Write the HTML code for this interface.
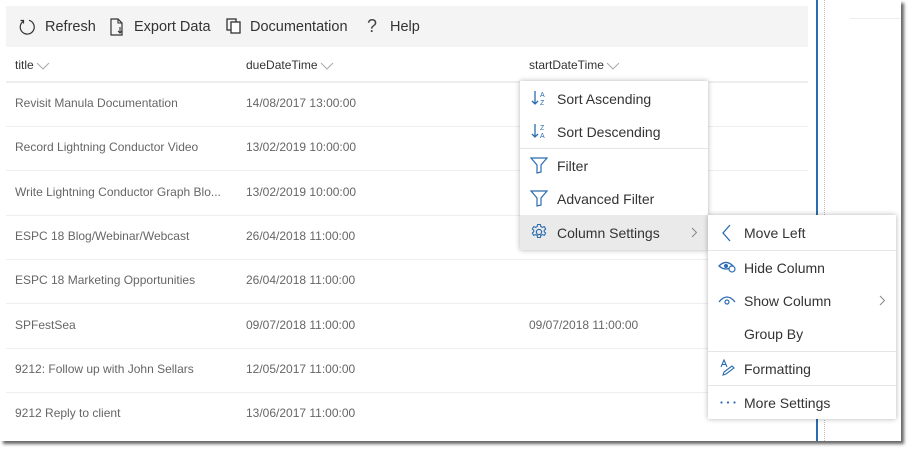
<!DOCTYPE html>
<html><head><style>
*{margin:0;padding:0;box-sizing:border-box}
body{width:915px;height:455px;background:#fff;position:relative;overflow:hidden;font-family:"Liberation Sans",sans-serif}
.frame{position:absolute;left:0;top:0;width:901px;height:441px;background:#fff;box-shadow:3px 3px 3px #666}
.tb{position:absolute;left:6px;top:6px;width:802px;height:41px;background:#f4f4f4;font-size:14.5px;color:#333}
.tb span{position:absolute;top:13px}
.hd{position:absolute;top:58px;font-size:12px;color:#333}
.hd svg{position:relative;display:inline-block;margin-left:2px;vertical-align:middle}
.row{position:absolute;left:6px;width:802px;border-top:1px solid #eee;height:44px}
.c{position:absolute;font-size:12px;color:#666}
.m{position:absolute;background:#fff;box-shadow:0 0 5px rgba(0,0,0,.3);font-size:14px;color:#333}
.it{position:absolute;left:0;right:0;height:33px}
.it span{position:absolute;top:9px}
.sep{position:absolute;left:0;right:0;border-top:1px solid #e6e6e6}
svg{position:absolute}
</style></head><body>
<div class="frame"></div>
<div class="tb">
<svg style="left:12px;top:12px" width="18" height="18" viewBox="0 0 18 18"><path d="M5 3.5A7 7 0 1 0 11 2.3" fill="none" stroke="#333" stroke-width="1.2"/><path d="M2.5 2.5h3v3" fill="none" stroke="#333" stroke-width="1.2"/></svg>
<span style="left:39px">Refresh</span>
<svg style="left:103px;top:12px" width="16" height="18" viewBox="0 0 16 18"><path d="M2 1h7l4 4v12H2z" fill="none" stroke="#333" stroke-width="1.2"/><path d="M9 1v4h4M11 9v6M9 13l2 2 2-2" fill="none" stroke="#333" stroke-width="1.1"/></svg>
<span style="left:128px">Export Data</span>
<svg style="left:220px;top:12px" width="16" height="16" viewBox="0 0 16 16"><rect x="1" y="1" width="9" height="11" fill="none" stroke="#333" stroke-width="1.3"/><rect x="5" y="4" width="9" height="11" fill="#fff" stroke="#333" stroke-width="1.3"/></svg>
<span style="left:244px">Documentation</span>
<span style="left:361px;font-size:18px;top:10px;color:#444">?</span>
<span style="left:384px">Help</span>
</div>
<div class="hd" style="left:15px">title<svg width="14" height="8" viewBox="0 0 14 8"><path d="M1 1l6 6 6-6" fill="none" stroke="#aaa" stroke-width="1"/></svg></div>
<div class="hd" style="left:246px">dueDateTime<svg width="14" height="8" viewBox="0 0 14 8"><path d="M1 1l6 6 6-6" fill="none" stroke="#aaa" stroke-width="1"/></svg></div>
<div class="hd" style="left:529px">startDateTime<svg width="14" height="8" viewBox="0 0 14 8"><path d="M1 1l6 6 6-6" fill="none" stroke="#aaa" stroke-width="1"/></svg></div>
<div class="row" style="top:81px;border-top:2px solid #eee"></div>
<div class="row" style="top:126px"></div><div class="row" style="top:170px"></div><div class="row" style="top:215px"></div><div class="row" style="top:259px"></div><div class="row" style="top:303px"></div><div class="row" style="top:348px"></div><div class="row" style="top:392px"></div>
<div class="c" style="left:15px;top:96px">Revisit Manula Documentation</div><div class="c" style="left:246px;top:96px">14/08/2017 13:00:00</div>
<div class="c" style="left:15px;top:140px">Record Lightning Conductor Video</div><div class="c" style="left:246px;top:140px">13/02/2019 10:00:00</div>
<div class="c" style="left:15px;top:185px">Write Lightning Conductor Graph Blo...</div><div class="c" style="left:246px;top:185px">13/02/2019 10:00:00</div>
<div class="c" style="left:15px;top:229px">ESPC 18 Blog/Webinar/Webcast</div><div class="c" style="left:246px;top:229px">26/04/2018 11:00:00</div>
<div class="c" style="left:15px;top:273px">ESPC 18 Marketing Opportunities</div><div class="c" style="left:246px;top:273px">26/04/2018 11:00:00</div>
<div class="c" style="left:15px;top:318px">SPFestSea</div><div class="c" style="left:246px;top:318px">09/07/2018 11:00:00</div><div class="c" style="left:529px;top:318px">09/07/2018 11:00:00</div>
<div class="c" style="left:15px;top:362px">9212: Follow up with John Sellars</div><div class="c" style="left:246px;top:362px">12/05/2017 11:00:00</div>
<div class="c" style="left:15px;top:406px">9212 Reply to client</div><div class="c" style="left:246px;top:406px">13/06/2017 11:00:00</div>
<div style="position:absolute;left:816px;top:0;width:2px;height:441px;background:#2b6cb0"></div>
<div style="position:absolute;left:824px;top:0;height:441px;border-left:1px dotted #bbb"></div>
<div style="position:absolute;left:850px;top:18px;width:51px;border-top:1px solid #eee"></div>

<div class="m" style="left:520px;top:81px;width:188px;height:169px">
<svg style="left:11px;top:9px" width="16" height="16" viewBox="0 0 16 16"><path d="M4 1v13M1 11l3 3 3-3" fill="none" stroke="#2b6cb0" stroke-width="1.3"/><text x="9" y="7" font-size="7" fill="#2b6cb0" font-family="Liberation Sans">A</text><text x="9" y="15" font-size="7" fill="#2b6cb0" font-family="Liberation Sans">Z</text></svg>
<div class="it" style="top:1px"><span style="left:37px">Sort Ascending</span></div>
<svg style="left:11px;top:42px" width="16" height="16" viewBox="0 0 16 16"><path d="M4 1v13M1 11l3 3 3-3" fill="none" stroke="#2b6cb0" stroke-width="1.3"/><text x="9" y="7" font-size="7" fill="#2b6cb0" font-family="Liberation Sans">Z</text><text x="9" y="15" font-size="7" fill="#2b6cb0" font-family="Liberation Sans">A</text></svg>
<div class="it" style="top:34px"><span style="left:37px">Sort Descending</span></div>
<div class="sep" style="top:67px"></div>
<svg style="left:10px;top:76px" width="18" height="17" viewBox="0 0 18 17"><path d="M1 1h16l-6 7v7l-4 1V8z" fill="none" stroke="#2b6cb0" stroke-width="1.2"/></svg>
<div class="it" style="top:68px"><span style="left:37px">Filter</span></div>
<svg style="left:10px;top:109px" width="18" height="17" viewBox="0 0 18 17"><path d="M1 1h16l-6 7v7l-4 1V8z" fill="none" stroke="#2b6cb0" stroke-width="1.2"/></svg>
<div class="it" style="top:101px"><span style="left:37px">Advanced Filter</span></div>
<div class="it" style="top:134px;height:35px;background:#eaeaea"><span style="left:37px;top:10px">Column Settings</span></div>
<svg style="left:171px;top:146px" width="7" height="11" viewBox="0 0 7 11"><path d="M1 1l4.5 4.5L1 10" fill="none" stroke="#888" stroke-width="1"/></svg>
<svg style="left:10px;top:142px" width="18" height="18" viewBox="0 0 18 18"><circle cx="9" cy="9" r="2.6" fill="none" stroke="#2b6cb0" stroke-width="1.2"/><path d="M7.6 1.5h2.8l.4 2 1.6.9 1.9-.8 1.4 2.4-1.5 1.3v1.4l1.5 1.3-1.4 2.4-1.9-.8-1.6.9-.4 2H7.6l-.4-2-1.6-.9-1.9.8-1.4-2.4 1.5-1.3V7.3L2.3 6l1.4-2.4 1.9.8 1.6-.9z" fill="none" stroke="#2b6cb0" stroke-width="1.1" stroke-linejoin="round"/></svg>
</div>

<div class="m" style="left:708px;top:215px;width:188px;height:204px">
<svg style="left:14px;top:9px" width="10" height="18" viewBox="0 0 10 18"><path d="M8 1L1 9l7 8" fill="none" stroke="#2b6cb0" stroke-width="1.3"/></svg>
<div class="it" style="top:1px"><span style="left:36px">Move Left</span></div>
<div class="sep" style="top:35px"></div>
<svg style="left:10px;top:45px" width="18" height="14" viewBox="0 0 18 14"><path d="M1 6Q8 -1 15 6Q8 12 1 6z" fill="none" stroke="#2b6cb0" stroke-width="1.3"/><circle cx="8" cy="6" r="2" fill="#2b6cb0"/><circle cx="14" cy="9" r="3" fill="#fff" stroke="#2b6cb0" stroke-width="1.2"/></svg>
<div class="it" style="top:36px"><span style="left:36px">Hide Column</span></div>
<svg style="left:10px;top:79px" width="18" height="12" viewBox="0 0 18 12"><path d="M1 8Q9 -2 17 8" fill="none" stroke="#2b6cb0" stroke-width="1.3"/><circle cx="9" cy="8" r="2" fill="none" stroke="#2b6cb0" stroke-width="1.2"/></svg>
<div class="it" style="top:69px"><span style="left:36px">Show Column</span></div>
<svg style="left:171px;top:80px" width="7" height="11" viewBox="0 0 7 11"><path d="M1 1l4.5 4.5L1 10" fill="none" stroke="#888" stroke-width="1"/></svg>
<div class="it" style="top:102px"><span style="left:36px">Group By</span></div>
<div class="sep" style="top:136px"></div>
<svg style="left:12px;top:144px" width="16" height="18" viewBox="0 0 16 18"><path d="M1 8L4 1l3 7M2.2 5.5h3.6" fill="none" stroke="#2b6cb0" stroke-width="1.1"/><path d="M3 16l1-3 8-6 2 2-8 6z" fill="none" stroke="#2b6cb0" stroke-width="1.1"/></svg>
<div class="it" style="top:137px"><span style="left:36px">Formatting</span></div>
<div class="sep" style="top:170px"></div>
<svg style="left:12px;top:186px" width="16" height="3" viewBox="0 0 16 3"><circle cx="1.5" cy="1.5" r="1.1" fill="#2b6cb0"/><circle cx="8" cy="1.5" r="1.1" fill="#2b6cb0"/><circle cx="14.5" cy="1.5" r="1.1" fill="#2b6cb0"/></svg>
<div class="it" style="top:171px"><span style="left:36px">More Settings</span></div>
</div>
</body></html>
